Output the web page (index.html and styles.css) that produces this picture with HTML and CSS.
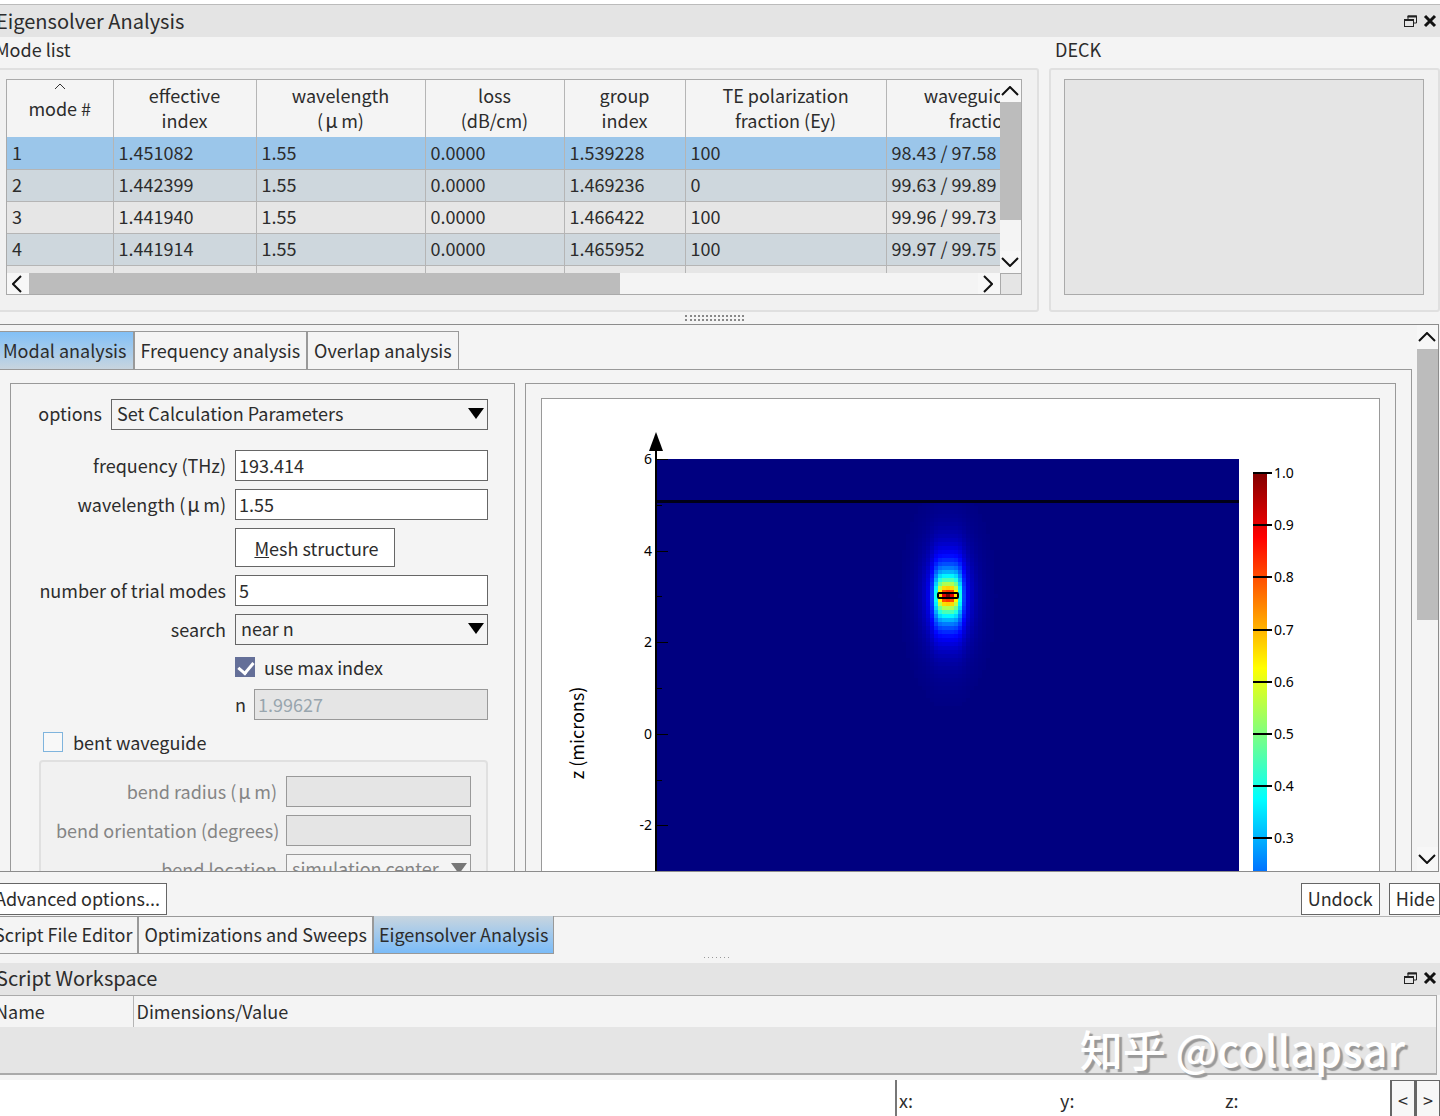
FILE: index.html
```html
<!DOCTYPE html>
<html lang="en">
<head>
  <meta charset="UTF-8">
  <meta name="viewport" content="width=device-width, initial-scale=1">
  <title>Eigensolver Analysis</title>
  <link rel="stylesheet" href="styles.css">
</head>
<body>
  <!-- Shared icons -->
  <svg class="defs" width="0" height="0">
    <symbol id="up" viewBox="0 0 18 10"><path d="M1 9 L9 1 L17 9" fill="none" stroke="#111" stroke-width="2"/></symbol>
    <symbol id="down" viewBox="0 0 18 10"><path d="M1 1 L9 9 L17 1" fill="none" stroke="#111" stroke-width="2"/></symbol>
    <symbol id="left" viewBox="0 0 10 18"><path d="M9 1 L1 9 L9 17" fill="none" stroke="#111" stroke-width="2"/></symbol>
    <symbol id="right" viewBox="0 0 10 18"><path d="M1 1 L9 9 L1 17" fill="none" stroke="#111" stroke-width="2"/></symbol>
    <symbol id="float" viewBox="0 0 13 12"><path d="M4 4 V1 H12.500 V8 H9.500" fill="none" stroke="#222"/><path d="M3.500 1.500 H13" stroke="#222" stroke-width="2"/><rect x="0.500" y="4.500" width="9" height="7" fill="none" stroke="#222"/><path d="M0 5 H10" stroke="#222" stroke-width="2"/></symbol>
    <symbol id="close" viewBox="0 0 14 14"><path d="M2 2 L12 12 M12 2 L2 12" stroke="#111" stroke-width="3"/></symbol>
  </svg>

  <div class="window">
    <header class="dock-title">
      <h1>Eigensolver Analysis</h1>
      <button class="icon-btn" aria-label="Float"><svg width="13" height="12"><use href="#float"/></svg></button>
      <button class="icon-btn" aria-label="Close"><svg width="14" height="14"><use href="#close"/></svg></button>
    </header>

    <!-- Mode list and deck -->
    <div class="top">
      <section class="group">
        <h2>Mode list</h2>
        <div class="group-box mode-box">
          <div class="list">
            <div class="list-view">
              <table class="modes">
                <colgroup><col class="c1"><col class="c2"><col class="c3"><col class="c4"><col class="c5"><col class="c6"><col class="c7"></colgroup>
                <thead>
                  <tr>
                    <th class="sorted"><svg width="12" height="7"><path d="M1 6 L6 1 L11 6" fill="none" stroke="#333"/></svg>mode #</th>
                    <th>effective<br>index</th>
                    <th>wavelength<br>(<span class="mu">μ</span>m)</th>
                    <th>loss<br>(dB/cm)</th>
                    <th>group<br>index</th>
                    <th>TE polarization<br>fraction (Ey)</th>
                    <th>waveguide TE/TM<br>fraction (%)</th>
                  </tr>
                </thead>
                <tbody>
                  <tr class="selected"><td>1</td><td>1.451082</td><td>1.55</td><td>0.0000</td><td>1.539228</td><td>100</td><td>98.43 / 97.58</td></tr>
                  <tr><td>2</td><td>1.442399</td><td>1.55</td><td>0.0000</td><td>1.469236</td><td>0</td><td>99.63 / 99.89</td></tr>
                  <tr><td>3</td><td>1.441940</td><td>1.55</td><td>0.0000</td><td>1.466422</td><td>100</td><td>99.96 / 99.73</td></tr>
                  <tr><td>4</td><td>1.441914</td><td>1.55</td><td>0.0000</td><td>1.465952</td><td>100</td><td>99.97 / 99.75</td></tr>
                  <tr><td></td><td></td><td></td><td></td><td></td><td></td><td></td></tr>
                </tbody>
              </table>
            </div>
            <div class="vbar list-vbar">
              <button aria-label="Scroll up"><svg width="18" height="10"><use href="#up"/></svg></button>
              <div class="thumb"></div>
              <button aria-label="Scroll down"><svg width="18" height="10"><use href="#down"/></svg></button>
            </div>
            <div class="hbar">
              <button aria-label="Scroll left"><svg width="10" height="18"><use href="#left"/></svg></button>
              <div class="thumb"></div>
              <button aria-label="Scroll right"><svg width="10" height="18"><use href="#right"/></svg></button>
            </div>
            <div class="corner"></div>
          </div>
        </div>
      </section>
      <section class="group">
        <h2>DECK</h2>
        <div class="group-box deck-box"><div class="deck"></div></div>
      </section>
    </div>

    <div class="splitter"><span class="grip"></span></div>

    <!-- Analysis area -->
    <main class="scroll-area">
      <div class="analysis">
        <nav class="tabs">
          <button class="tab active">Modal analysis</button>
          <button class="tab">Frequency analysis</button>
          <button class="tab">Overlap analysis</button>
        </nav>
        <div class="tab-page">
          <form class="panel params">
            <div class="row options">
              <label for="options">options</label>
              <span class="select"><select id="options"><option>Set Calculation Parameters</option></select></span>
            </div>
            <div class="row"><label for="freq">frequency (THz)</label><input type="text" id="freq" value="193.414"></div>
            <div class="row"><label for="wl">wavelength (<span class="mu">μ</span>m)</label><input type="text" id="wl" value="1.55"></div>
            <div class="row"><span class="blank"></span><button type="button" class="mesh"><u>M</u>esh structure</button></div>
            <div class="row"><label for="trial">number of trial modes</label><input type="text" id="trial" value="5"></div>
            <div class="row"><label for="search">search</label><span class="select"><select id="search"><option>near n</option></select></span></div>
            <div class="row check-row"><span class="blank"></span><input type="checkbox" id="maxIndex" checked><label for="maxIndex">use max index</label></div>
            <div class="row n-row"><span class="blank"></span><label for="n">n</label><input type="text" id="n" value="1.99627" disabled></div>
            <div class="check-row bent"><input type="checkbox" id="bent"><label for="bent">bent waveguide</label></div>
            <div class="bend-box">
              <div class="row"><label for="radius">bend radius (<span class="mu">μ</span>m)</label><input type="text" id="radius" disabled></div>
              <div class="row"><label for="orient">bend orientation (degrees)</label><input type="text" id="orient" disabled></div>
              <div class="row"><label for="loc">bend location</label><span class="select off"><select id="loc" disabled><option>simulation center</option></select></span></div>
            </div>
          </form>

          <div class="panel plot-panel">
            <div class="plot">
              <svg width="840" height="620" role="img" aria-label="Mode profile">
                <defs>
                  <linearGradient id="jet" x1="0" y1="0" x2="0" y2="1">
                    <stop offset="0" stop-color="#800000"/>
                    <stop offset="0.125" stop-color="#ff0000"/>
                    <stop offset="0.375" stop-color="#ffff00"/>
                    <stop offset="0.625" stop-color="#00ffff"/>
                    <stop offset="0.875" stop-color="#0000ff"/>
                    <stop offset="1" stop-color="#000080"/>
                  </linearGradient>
                </defs>
                <rect x="114" y="60" width="583" height="560" fill="#000080"/>
                <g id="field" shape-rendering="crispEdges"></g>
                <rect x="114" y="101" width="583" height="3" fill="#000018"/>
                <rect x="396" y="194" width="20" height="5" rx="1" fill="none" stroke="#000" stroke-width="2"/>
                <rect x="113" y="48" width="2" height="572" fill="#000"/>
                <path d="M114 33 L121 52 H107 Z" fill="#000"/>
                <g id="yaxis" class="tick"></g>
                <text class="axis-title" transform="translate(42 334) rotate(-90)">z (microns)</text>
                <rect x="711" y="73" width="14" height="523" fill="url(#jet)"/>
                <g id="colorbar" class="tick"></g>
              </svg>
            </div>
          </div>
        </div>
      </div>
      <div class="vbar main-vbar">
        <button aria-label="Scroll up"><svg width="18" height="10"><use href="#up"/></svg></button>
        <div class="thumb"></div>
        <button aria-label="Scroll down"><svg width="18" height="10"><use href="#down"/></svg></button>
      </div>
    </main>

    <div class="actions">
      <button class="advanced">Advanced options...</button>
      <button>Undock</button>
      <button class="hide">Hide</button>
    </div>

    <nav class="tabs dock-tabs">
      <button class="tab">Script File Editor</button>
      <button class="tab">Optimizations and Sweeps</button>
      <button class="tab active">Eigensolver Analysis</button>
    </nav>
    <div class="dots"><span></span></div>

    <!-- Script workspace -->
    <header class="dock-title">
      <h1>Script Workspace</h1>
      <button class="icon-btn" aria-label="Float"><svg width="13" height="12"><use href="#float"/></svg></button>
      <button class="icon-btn" aria-label="Close"><svg width="14" height="14"><use href="#close"/></svg></button>
    </header>
    <div class="workspace">
      <table>
        <thead><tr><th class="name">Name</th><th>Dimensions/Value</th></tr></thead>
      </table>
      <div class="watermark">知乎 @collapsar</div>
    </div>

    <footer class="status">
      <span class="coord">x:</span>
      <span class="coord">y:</span>
      <span class="coord">z:</span>
      <button>&lt;</button>
      <button>&gt;</button>
    </footer>
  </div>

  <script>
    const NS = 'http://www.w3.org/2000/svg';

    function add(parent, name, attrs, text) {
      const el = document.createElementNS(NS, name);
      for (const key in attrs) el.setAttribute(key, attrs[key]);
      if (text !== undefined) el.textContent = text;
      parent.appendChild(el);
    }

    // jet colour map, v from 0 to 1
    function jet(v) {
      const c = [3, 2, 1].map(k => Math.max(0, Math.min(1, 1.5 - Math.abs(4 * v - k))));
      return 'rgb(' + c.map(x => Math.round(x * 255)).join(',') + ')';
    }

    // field intensity around the core, flatter inside it than outside
    const field = document.getElementById('field');
    const cx = 406, cy = 197, cell = 4;
    for (let y = cy - 94; y < cy + 118; y += cell) {
      for (let x = cx - 54; x < cx + 54; x += cell) {
        const dx = Math.abs(x + 2 - cx), dy = y + 2 - cy;
        const v = Math.exp(-Math.hypot(dy, Math.min(0.13 * dx * dx, 2.3 * dx)) / 20);
        if (v > 0.004) add(field, 'rect', { x, y, width: cell, height: cell, fill: jet(v) });
      }
    }

    // y axis, one tick per micron
    const yaxis = document.getElementById('yaxis');
    for (let z = 6; z >= -5; z--) {
      const y = Math.round(60 + (6 - z) * 45.8);
      const major = z % 2 === 0;
      add(yaxis, 'rect', { x: 114, y, width: major ? 12 : 6, height: 1 });
      if (major) add(yaxis, 'text', { x: 110, y: y + 5, 'text-anchor': 'end' }, z);
    }

    // colour bar scale
    const bar = document.getElementById('colorbar');
    for (let i = 10; i >= 0; i--) {
      const y = Math.round(73 + (10 - i) * 52.2);
      add(bar, 'rect', { x: 711, y, width: 19, height: 2 });
      add(bar, 'text', { x: 732, y: y + 6 }, (i / 10).toFixed(1));
    }
  </script>
</body>
</html>
```
FILE: styles.css
```css
* {
  margin: 0;
  padding: 0;
  box-sizing: border-box;
}
body {
  background: #fff;
  color: #2c2c2c;
  font-family: "Noto Sans CJK SC", "Noto Sans", sans-serif;
  font-size: 18px;
  line-height: 24px;
  overflow: hidden;
}
button, input, select {
  font: inherit;
  color: inherit;
  border-radius: 0;
}
h1, h2, th {
  font-weight: normal;
}
.defs {
  position: absolute;
}
/* the window hangs a little over the left screen edge */
.window {
  margin-left: -6px;
  height: 100vh;
  display: flex;
  flex-direction: column;
  background: #f4f4f4;
  border-top: 4px solid #fff;
}
.dock-title {
  flex: none;
  height: 32px;
  background: #e4e4e4;
  display: flex;
  align-items: center;
  gap: 6px;
  padding: 0 3px 3px 2px;
}
.dock-title:first-child {
  height: 33px;
  padding-bottom: 0;
  border-top: 1px solid #bbb;
}
.dock-title h1 {
  flex: 1;
  font-size: 20px;
}
.icon-btn {
  border: none;
  background: none;
  display: flex;
}

/* Mode list */
.top {
  flex: none;
  display: grid;
  grid-template-columns: 1fr 391px;
  gap: 10px;
}
.group h2 {
  font-size: 18px;
  height: 31px;
  line-height: 24px;
  padding-left: 1px;
}
.group:last-child h2 {
  padding-left: 6px;
}
.group-box {
  height: 244px;
  border: 2px solid #e0e0e0;
  border-radius: 3px;
  background: #f1f1f1;
}
.mode-box {
  padding: 9px 15px 15px 10px;
}
.deck-box {
  padding: 9px 14px 15px 13px;
}
.deck {
  height: 100%;
  background: #e5e5e5;
  border: 1px solid #aaa;
}
.list {
  height: 100%;
  border: 1px solid #aaa;
  display: grid;
  grid-template-columns: 1fr 21px;
  grid-template-rows: 1fr 21px;
  background: #f4f4f4;
}
.list-view {
  overflow: hidden;
  min-width: 0;
  min-height: 0;
}
.modes {
  table-layout: fixed;
  width: 1103px;
  border-collapse: collapse;
}
.c1 { width: 106px; }
.c2 { width: 143px; }
.c3 { width: 169px; }
.c4 { width: 139px; }
.c5 { width: 121px; }
.c6 { width: 201px; }
.c7 { width: 224px; }
.modes th {
  height: 57px;
  padding-bottom: 2px;
  line-height: 25px;
  border-right: 1px solid #b5b5b5;
  background: #f4f4f4;
}
.modes th.sorted {
  vertical-align: top;
}
.sorted svg {
  display: block;
  margin: 3px auto 6px;
}
.modes td {
  height: 32px;
  padding: 0 0 2px 5px;
  border-right: 1px solid #b5b5b5;
  border-bottom: 1px solid #b5b5b5;
  background: #e6e6e6;
  line-height: 24px;
}
.modes tr:nth-child(even) td {
  background: #ced7dd;
}
.modes .selected td {
  background: #9bc6ea;
}
.mu {
  display: inline-block;
  width: 18px;
  padding-left: 2px;
  text-align: left;
  font-size: 20px;
  line-height: 20px;
}
.vbar, .hbar {
  display: flex;
  justify-content: space-between;
  background: #f4f4f4;
}
.vbar {
  flex-direction: column;
}
.vbar button, .hbar button {
  flex: none;
  border: none;
  background: #f7f7f7;
  display: flex;
  align-items: center;
  justify-content: center;
}
.vbar button {
  height: 22px;
  padding-right: 2px;
}
.hbar button {
  width: 22px;
  padding-right: 2px;
}
.thumb {
  background: #bcbcbc;
}
.list-vbar .thumb {
  height: 118px;
  margin-bottom: auto;
}
.hbar .thumb {
  width: 591px;
  margin-right: auto;
}
.corner {
  background: #e5e5e5;
  border-top: 1px solid #aaa;
  border-left: 1px solid #aaa;
}
.splitter {
  flex: none;
  height: 12px;
  display: flex;
  justify-content: center;
  align-items: center;
  padding-right: 6px;
}
.grip {
  width: 59px;
  height: 6px;
  border: solid #888;
  border-width: 2px 0;
  border-style: dotted;
}

/* Analysis area */
.scroll-area {
  flex: 1;
  min-height: 0;
  overflow: hidden;
  display: flex;
  gap: 5px;
  border: 1px solid #8c8c8c;
  margin-right: 1px;
}
.analysis {
  flex: 1;
  min-width: 0;
  padding-top: 6px;
}
.tabs {
  display: flex;
}
.tab {
  height: 38px;
  padding: 0 6px;
  background: #f4f4f4;
  border: 1px solid #999;
  border-right-width: 2px;
  border-left: none;
  white-space: nowrap;
}
.tab:last-child {
  border-right-width: 1px;
}
.tab.active {
  background: linear-gradient(#82c0f7, #c8d5df);
}
.tab-page {
  border-top: 1px solid #999;
  border-right: 1px solid #999;
  padding: 13px 15px 0;
  display: flex;
  gap: 10px;
}
.analysis .tabs {
  padding-left: 2px;
}
.analysis .tab {
  height: 39px;
  padding-bottom: 1px;
  margin-bottom: -1px;
  z-index: 1;
}
.panel {
  border: 1px solid #999;
}
.params {
  flex: none;
  width: 505px;
  padding: 15px 26px 0 27px;
}
.row {
  display: flex;
  align-items: center;
  gap: 9px;
  margin-bottom: 8px;
}
.row > label, .blank {
  width: 188px;
  padding-bottom: 2px;
  text-align: right;
  white-space: nowrap;
}
input[type="text"], select {
  flex: 1;
  min-width: 0;
  width: 100%;
  height: 31px;
  border: 1px solid #666;
  background: #fff;
  padding: 0 3px 1px;
}
.select {
  flex: 1;
  display: flex;
  position: relative;
}
select {
  appearance: none;
  background: #f4f4f4;
  padding: 0 5px 3px;
}
.select::after {
  content: "";
  position: absolute;
  right: 4px;
  top: 9px;
  border: 8px solid transparent;
  border-top: 11px solid #000;
  border-bottom: none;
  pointer-events: none;
}
.options {
  margin-bottom: 20px;
}
.row.options > label {
  width: 64px;
  padding-bottom: 4px;
}
.mesh {
  width: 160px;
  height: 39px;
  padding-left: 3px;
  background: #fff;
  border: 1px solid #666;
}
input[type="checkbox"] {
  appearance: none;
  flex: none;
  width: 20px;
  height: 20px;
  border: 1px solid #7fb4dd;
  background: #f8f8f8;
}
input[type="checkbox"]:checked {
  border-color: #646f98;
  background: #646f98;
}
input[type="checkbox"]:checked::after {
  content: "";
  display: block;
  width: 7px;
  height: 12px;
  margin: 1px 0 0 5px;
  border: solid #fff;
  border-width: 0 3px 3px 0;
  transform: rotate(40deg);
}
.check-row {
  display: flex;
  height: 28px;
}
.check-row > label {
  width: auto;
  padding-bottom: 0;
}
.n-row > label {
  width: 10px;
}
input:disabled {
  background: #e5e5e5;
  border-color: #999;
  color: #98a5ae;
}
.bent {
  align-items: center;
  gap: 10px;
  padding-left: 5px;
}
.bend-box {
  margin: 4px 0 0 1px;
  padding: 14px 15px 12px;
  border: 2px solid #e0e0e0;
  border-radius: 4px;
  background: #f1f1f1;
  color: #858585;
}
.bend-box .row > label {
  width: 221px;
}
.off select {
  opacity: 1;
  border-color: #999;
}
.off::after {
  border-top-color: #777;
}
.plot-panel {
  flex: 1;
  min-width: 0;
  padding: 14px 15px;
}
.plot {
  border: 1px solid #999;
  background: #fff;
  overflow: hidden;
}
.plot svg {
  display: block;
}
.tick {
  font-family: "Noto Sans", sans-serif;
  font-size: 14px;
}
.axis-title {
  font-size: 18px;
  text-anchor: middle;
}
.main-vbar {
  width: 21px;
}
.main-vbar button {
  height: 24px;
}
.main-vbar .thumb {
  height: 271px;
  margin-bottom: auto;
}

/* Lower bar */
.actions {
  flex: none;
  height: 45px;
  display: flex;
  gap: 9px;
  padding-top: 11px;
  border-bottom: 1px solid #b5b5b5;
}
.actions button {
  height: 32px;
  padding: 0 6px 2px;
  background: #fff;
  border: 1px solid #666;
}
.actions .advanced {
  margin-right: auto;
  padding-left: 1px;
  border-left: none;
}
.actions .hide {
  padding-right: 4px;
}
.dock-tabs {
  flex: none;
  margin-top: -1px;
}
.dock-tabs .tab {
  padding: 0 5px 2px;
}
.dock-tabs .tab.active {
  background: linear-gradient(#c8d5df, #7bbcf8);
  border-top: none;
}
.dock-tabs .tab:first-child {
  padding-left: 0;
}
.dots {
  flex: none;
  height: 9px;
  display: flex;
  justify-content: center;
  padding: 3px 0 0 0;
}
.dots span {
  width: 26px;
  height: 1px;
  background: repeating-linear-gradient(90deg, #999 0 1px, #f4f4f4 1px 4px);
}

/* Script workspace */
.workspace {
  flex: none;
  position: relative;
  height: 80px;
  margin: 0 3px 5px 0;
  background: #e5e5e5;
  border: 1px solid #aaa;
  border-bottom-width: 2px;
}
.workspace table {
  width: 100%;
  border-collapse: collapse;
}
.workspace th {
  height: 31px;
  padding: 0 0 2px 3px;
  text-align: left;
  background: #f4f4f4;
}
.workspace .name {
  width: 138px;
  padding-left: 0;
  border-right: 1px solid #b5b5b5;
}
.watermark {
  position: absolute;
  right: 31px;
  top: 27px;
  font-size: 43px;
  font-weight: 500;
  line-height: 50px;
  color: #fff;
  text-shadow: 3px 3px 1px #999;
  white-space: nowrap;
}
.status {
  flex: none;
  height: 36px;
  background: #fff;
  display: flex;
  justify-content: flex-end;
}
.coord {
  width: 165px;
  line-height: 40px;
}
.coord:first-child {
  border-left: 2px solid #777;
  padding-left: 2px;
}
.status button {
  width: 25px;
  padding-top: 2px;
  background: #f7f7f7;
  border: 1px solid #666;
  border-left-width: 2px;
  border-bottom: none;
}
```
